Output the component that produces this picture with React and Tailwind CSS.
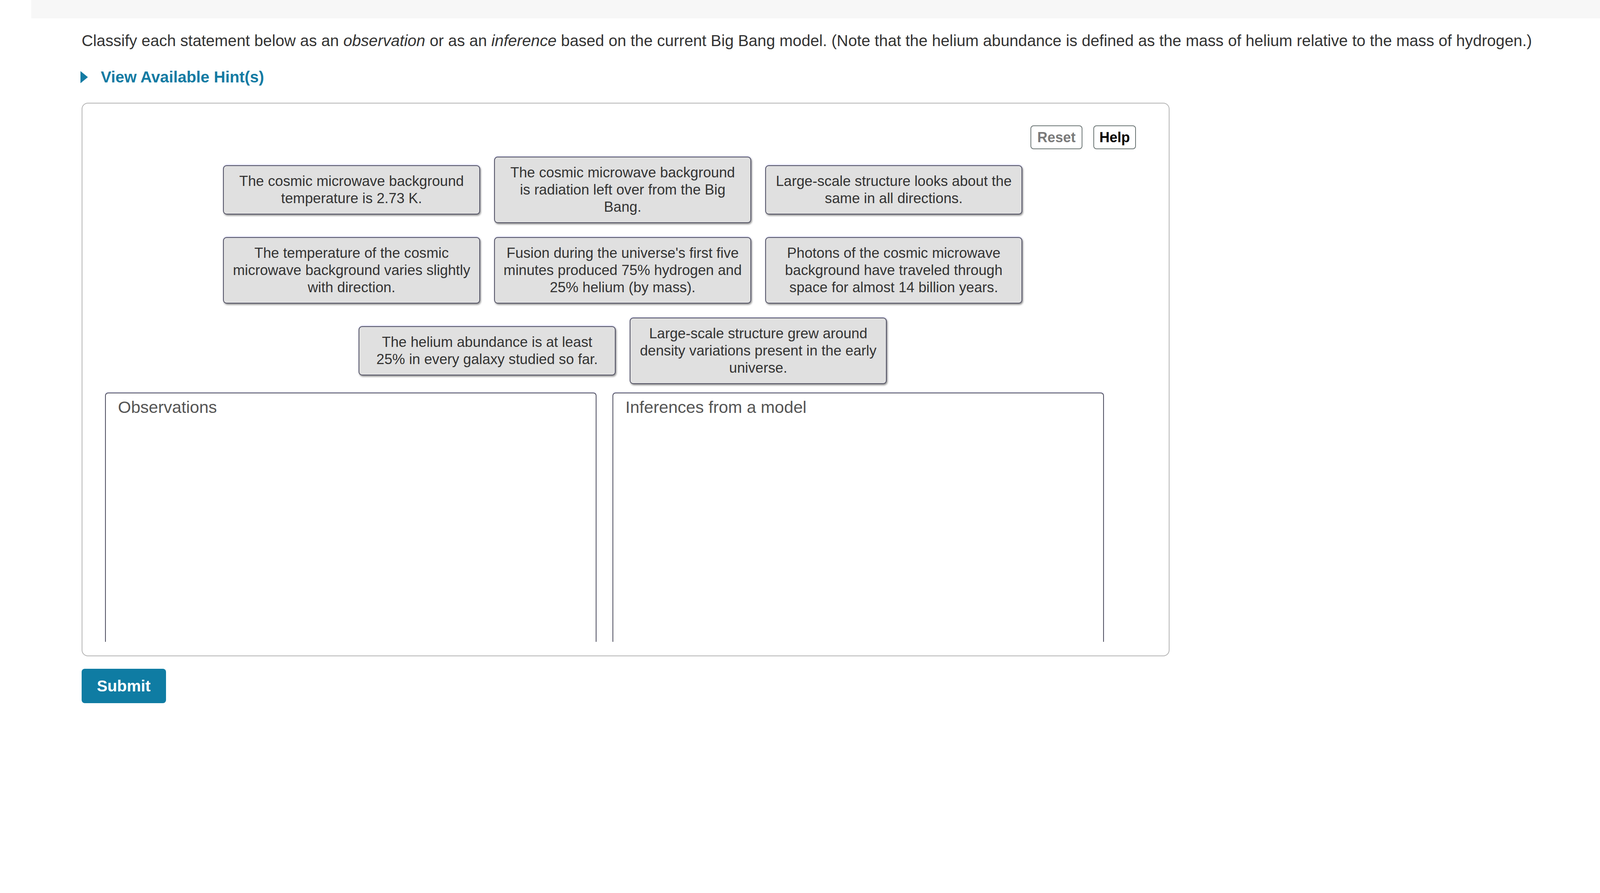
import React from 'react';

// each card keeps the line breaks shown in the exercise
const rows = [
  [
    ['The cosmic microwave background', 'temperature is 2.73 K.'],
    ['The cosmic microwave background', 'is radiation left over from the Big', 'Bang.'],
    ['Large-scale structure looks about the', 'same in all directions.'],
  ],
  [
    ['The temperature of the cosmic', 'microwave background varies slightly', 'with direction.'],
    ["Fusion during the universe's first five", 'minutes produced 75% hydrogen and', '25% helium (by mass).'],
    ['Photons of the cosmic microwave', 'background have traveled through', 'space for almost 14 billion years.'],
  ],
  [
    ['The helium abundance is at least', '25% in every galaxy studied so far.'],
    ['Large-scale structure grew around', 'density variations present in the early', 'universe.'],
  ],
];

function Card({ lines }) {
  return (
    <div className="w-[658px] rounded-[9px] border-2 border-[#515163] bg-[#e0e0e0] px-[8px] py-[17px] text-center text-[36.7px] leading-[44px] text-[#333] shadow-[2px_3px_4px_rgba(0,0,0,0.45),0_-2px_3px_rgba(140,140,230,0.3)]">
      {lines.map((l) => (
        <div key={l} className="whitespace-nowrap">
          {l}
        </div>
      ))}
    </div>
  );
}

function DropZone({ label }) {
  return (
    <div className="h-[638px] w-[1258px] rounded-t-[8px] border-2 border-b-0 border-[#4d4d5c] bg-white pl-[31px] pt-[11px] shadow-[0_-2px_3px_rgba(140,140,230,0.25)]">
      <span className="text-[43px] leading-[49px] text-[#555]">{label}</span>
    </div>
  );
}

export default function App() {
  return (
    <div className="bg-white font-['Liberation_Sans',Arial,sans-serif] text-[#333]">
      {/* top bar */}
      <div className="ml-[80px] h-[47px] bg-[#f7f7f7]" />

      <div className="pl-[209px] pb-[4px]">
        <p className="mt-[33px] text-[40.6px] leading-[48px] text-[#333]">
          Classify each statement below as an <i>observation</i> or as an <i>inference</i> based on the current Big Bang model. (Note that the helium abundance is defined as the mass of helium relative to the mass of hydrogen.)
        </p>

        <div className="mt-[45px] flex items-center gap-[33px]">
          <svg width="19" height="31" viewBox="0 0 19 31" className="-ml-[3px]">
            <polygon points="0,0 19,15.5 0,31" fill="#137ba3" />
          </svg>
          <span className="text-[40.6px] font-bold leading-[48px] text-[#137ba3]">View Available Hint(s)</span>
        </div>

        {/* main drag & drop box */}
        <div className="mt-[42px] h-[1417px] w-[2785px] overflow-hidden rounded-[16px] border-2 border-[#b3b3b3] bg-white">
          <div className="flex justify-end gap-[28px] pr-[84px] pt-[56px]">
            <button className="h-[61px] w-[133px] rounded-[8px] border-2 border-[#6b7574] bg-white text-[36px] font-bold leading-[40px] text-[#7a7a7a]">
              Reset
            </button>
            <button className="h-[61px] w-[109px] rounded-[8px] border-2 border-[#6b7574] bg-white text-[36px] font-bold leading-[40px] text-black">
              Help
            </button>
          </div>

          <div className="mt-[19px] flex flex-col gap-[36px] pr-[15px]">
            {rows.map((row, i) => (
              <div key={i} className="flex items-center justify-center gap-[36px]">
                {row.map((lines) => (
                  <Card key={lines[0] + lines.length} lines={lines} />
                ))}
              </div>
            ))}
          </div>

          <div className="ml-[58px] mt-[22px] flex gap-[41px]">
            <DropZone label="Observations" />
            <DropZone label="Inferences from a model" />
          </div>
        </div>

        <button className="mt-[32px] rounded-[8px] bg-[#0f7ca3] px-[39px] py-[20px] text-[40.6px] font-bold leading-[48px] text-white">
          Submit
        </button>
      </div>
    </div>
  );
}
